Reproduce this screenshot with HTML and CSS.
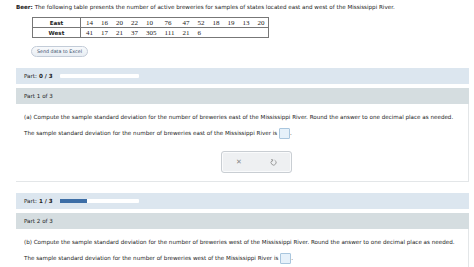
FILE: index.html
```html
<!DOCTYPE html>
<html lang="en">
  <head>
    <meta charset="UTF-8" />
    <title>Beer - Breweries</title>
    <link rel="stylesheet" href="styles.css">
  </head>
  <body>
    <div class="page">
      <p class="intro">
        <b>Beer:</b> The following table presents the number of active breweries
        for samples of states located east and west of the Mississippi River.
      </p>
      <table class="data">
        <tr>
          <th>East</th>
          <td class="first">14</td><td>16</td><td>20</td><td>22</td><td>10</td><td>76</td>
          <td>47</td><td>52</td><td>18</td><td>19</td><td>13</td><td>20</td>
        </tr>
        <tr>
          <th>West</th>
          <td class="first">41</td><td>17</td><td>21</td><td>37</td><td>305</td><td>111</td>
          <td>21</td><td>6</td><td></td><td></td><td></td><td></td>
        </tr>
      </table>
      <button class="excel">Send data to Excel</button>

      <div class="part-bar">
        Part: <b>0 / 3</b>
        <div class="track"><div class="fill" style="width: 0%"></div></div>
      </div>
      <div class="part-head">Part 1 of 3</div>
      <div class="part-body">
        <p>(a) Compute the sample standard deviation for the number of breweries east of the Mississippi River. Round the answer to one decimal place as needed.</p>
        <p>The sample standard deviation for the number of breweries east of the Mississippi River is <span class="answer"></span>.</p>
        <div class="tools">
          <span class="tool">&#x2715;</span>
          <span class="tool">
            <svg width="7" height="7" viewBox="0 0 10 10">
              <path d="M3 2.2 A3.6 3.6 0 1 0 6.6 1.8" fill="none" stroke="#888" stroke-width="1.1" />
              <path d="M1.6 0.8 L4.2 1.2 L3 3.6" fill="none" stroke="#888" stroke-width="1.1" />
            </svg>
          </span>
        </div>
      </div>

      <div class="part-bar">
        Part: <b>1 / 3</b>
        <div class="track"><div class="fill" style="width: 34%"></div></div>
      </div>
      <div class="part-head">Part 2 of 3</div>
      <div class="part-body">
        <p>(b) Compute the sample standard deviation for the number of breweries west of the Mississippi River. Round the answer to one decimal place as needed.</p>
        <p>The sample standard deviation for the number of breweries west of the Mississippi River is <span class="answer"></span>.</p>
      </div>
    </div>
  </body>
</html>
```

FILE: styles.css
```css
body {
  background-color: white;
  color: #222;
  font-family: "DejaVu Sans", Verdana, sans-serif;
  font-size: 5.6px;
  margin: 0;
  padding: 0;
}
.page {
  padding: 4px 5px 0 16px;
}
.intro {
  margin: 0;
  line-height: 7px;
}
.data {
  border-collapse: collapse;
  margin: 6px 0 0 16px;
  border: 1px solid #777;
  font-family: "Liberation Serif", "Times New Roman", serif;
  font-size: 7px;
}
.data tr + tr {
  border-top: 1px solid #777;
}
.data th {
  width: 47px;
  height: 9px;
  padding: 0;
  font-family: "DejaVu Sans", Verdana, sans-serif;
  font-size: 5.6px;
  text-align: center;
  border-right: 1px solid #777;
}
.data td {
  padding: 0 4px;
  text-align: left;
}
.data td.first {
  padding-left: 5px;
}
.excel {
  display: block;
  margin: 8px 0 0 15px;
  height: 11px;
  width: 57px;
  padding: 0;
  border: 1px solid #c3ccd8;
  border-radius: 6px;
  background: linear-gradient(#f8fafc, #e8edf3);
  color: #3b4f6b;
  font-family: "DejaVu Sans", Verdana, sans-serif;
  font-size: 4.8px;
}
.part-bar {
  display: flex;
  align-items: center;
  height: 16px;
  margin-top: 11px;
  padding-left: 8px;
  background-color: #dce6ef;
}
.part-bar b {
  margin-left: 2px;
}
.track {
  width: 79px;
  height: 4px;
  margin-left: 7px;
  background-color: white;
  border-radius: 1px;
}
.fill {
  height: 100%;
  background-color: #3d6ea6;
}
.part-head {
  margin-top: 4px;
  height: 16px;
  line-height: 16px;
  padding-left: 8px;
  background-color: #d5dde0;
}
.part-body {
  border-right: 1px solid #e3e6e8;
  border-bottom: 1px solid #e3e6e8;
  padding: 10px 8px 8px 8px;
}
.part-body p {
  margin: 0 0 7px 0;
  line-height: 7px;
}
.answer {
  display: inline-block;
  width: 9px;
  height: 9px;
  vertical-align: middle;
  border: 1px solid #a9c6de;
  background-color: #e6f1fa;
  border-radius: 1px;
}
.tools {
  display: flex;
  justify-content: space-around;
  align-items: center;
  width: 69px;
  height: 20px;
  margin: 12px 0 0 197px;
  border: 1px solid #c9ced3;
  border-radius: 3px;
  background-color: #eef0f2;
  box-shadow: inset 0 0 0 1px #fafbfc;
  color: #888;
  font-size: 7px;
}
.tool {
  display: flex;
  align-items: center;
}
```
